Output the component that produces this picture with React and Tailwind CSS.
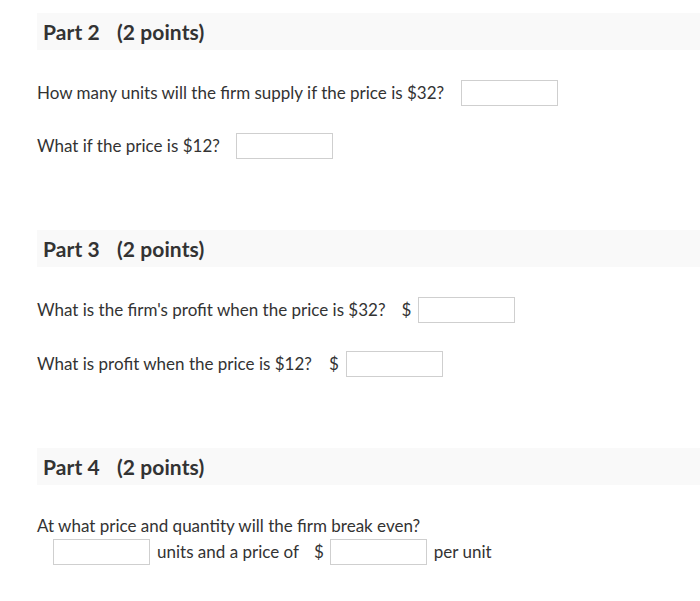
const FONT = { fontFamily: 'Lato, "Open Sans", sans-serif' };

function Box({ className = '' }) {
  return (
    <input
      type="text"
      className={`w-[97px] h-[26px] border border-[#cfcfcf] bg-white outline-none ${className}`}
    />
  );
}

function PartHeader({ part }) {
  return (
    <div className="h-[37px] bg-[#f9f9f9] flex items-center pl-[6px]">
      <h3 className="text-[21px] font-bold text-[#333] tracking-[0.1px]">
        Part {part}
        <span className="ml-[17px]">(2 points)</span>
      </h3>
    </div>
  );
}

function Row({ label, dollar, gap = 'ml-[16px]', className = '' }) {
  return (
    <div className={`flex items-center h-[26px] ${className}`}>
      <span>{label}</span>
      {dollar ? (
        <>
          <span className={gap}>$</span>
          <Box className="ml-[7px]" />
        </>
      ) : (
        <Box className={gap} />
      )}
    </div>
  );
}

export default function App() {
  return (
    <div className="w-[700px] h-[601px] bg-white pl-[37px] pt-[13px] text-[17px] text-[#333]" style={FONT}>
      {/* Part 2 */}
      <PartHeader part={2} />
      <Row className="mt-[30px]" gap="ml-[17px]" label="How many units will the firm supply if the price is $32?" />
      <Row className="mt-[27px]" gap="ml-[16px]" label="What if the price is $12?" />

      {/* Part 3 */}
      <div className="mt-[71px]">
        <PartHeader part={3} />
      </div>
      <Row className="mt-[30px]" dollar label="What is the firm's profit when the price is $32?" />
      <Row className="mt-[28px]" dollar gap="ml-[17px]" label="What is profit when the price is $12?" />

      {/* Part 4 */}
      <div className="mt-[71px]">
        <PartHeader part={4} />
      </div>
      <p className="mt-[31px] leading-[20px]">At what price and quantity will the firm break even?</p>
      <div className="flex items-center mt-[3px] pl-[16px]">
        <Box />
        <span className="ml-[7px]">units and a price of</span>
        <span className="ml-[15px]">$</span>
        <Box className="ml-[6px]" />
        <span className="ml-[7px]">per unit</span>
      </div>
    </div>
  );
}
